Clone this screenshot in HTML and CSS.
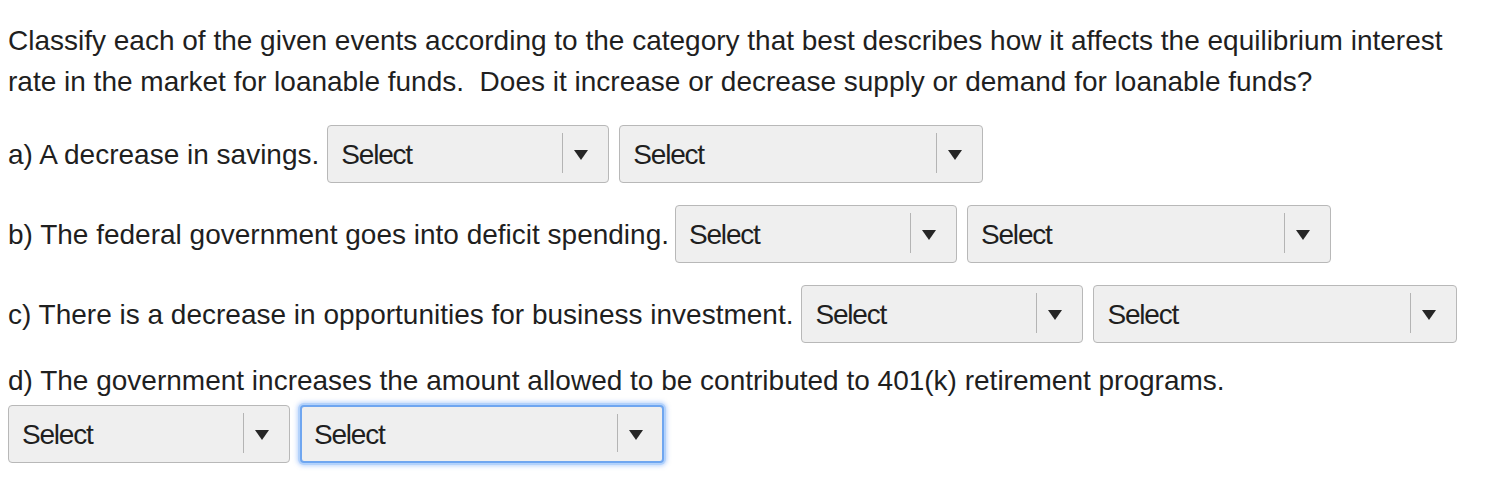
FILE: index.html
```html
<!DOCTYPE html>
<html>
<head>
<meta charset="utf-8">
<link rel="stylesheet" href="styles.css">
</head>
<body>
<p class="intro">Classify each of the given events according to the category that best describes how it affects the equilibrium interest<br>rate in the market for loanable funds.&nbsp; Does it increase or decrease supply or demand for loanable funds?</p>

<div class="row">
  <span class="label">a) A decrease in savings.</span>
  <div class="sel narrow"><span class="val">Select</span><span class="div"></span><span class="arrow"></span></div>
  <div class="sel wide"><span class="val">Select</span><span class="div"></span><span class="arrow"></span></div>
</div>

<div class="row">
  <span class="label label-b">b) The federal government goes into deficit spending.</span>
  <div class="sel narrow"><span class="val">Select</span><span class="div"></span><span class="arrow"></span></div>
  <div class="sel wide"><span class="val">Select</span><span class="div"></span><span class="arrow"></span></div>
</div>

<div class="row">
  <span class="label">c) There is a decrease in opportunities for business investment.</span>
  <div class="sel narrow"><span class="val">Select</span><span class="div"></span><span class="arrow"></span></div>
  <div class="sel wide"><span class="val">Select</span><span class="div"></span><span class="arrow"></span></div>
</div>

<div class="row row-d">
  <span class="label">d) The government increases the amount allowed to be contributed to 401(k) retirement programs.</span>
  <div class="sel narrow"><span class="val">Select</span><span class="div"></span><span class="arrow"></span></div>
  <div class="sel wide focused"><span class="val">Select</span><span class="div"></span><span class="arrow"></span></div>
</div>
</body>
</html>
```
FILE: styles.css
```css
html, body {
  background: #ffffff;
}
body {
  margin: 8px;
  font-family: "Liberation Sans", Arial, sans-serif;
  font-size: 28px;
  line-height: 41px;
  color: #1f1f1f;
}
.intro {
  margin: 12px 0 23px 0;
}
.row {
  display: flex;
  flex-wrap: wrap;
  align-items: center;
  column-gap: 10px;
  row-gap: 4px;
  margin-bottom: 22px;
}
.row-d {
  margin-top: -5px;
}
.label {
  white-space: nowrap;
  margin-right: -2px;
}
.label-b {
  margin-right: -4px;
}
.row-d .label {
  flex-basis: 100%;
  margin-right: 0;
}
.sel {
  position: relative;
  box-sizing: border-box;
  height: 58px;
  display: flex;
  align-items: center;
  background: #efefef;
  border: 1px solid #b8b8b8;
  border-radius: 4px;
  color: #1f1f1f;
  font-size: 28px;
  letter-spacing: -1.2px;
}
.sel.narrow {
  width: 282px;
}
.sel.wide {
  width: 364px;
}
.val {
  flex: 1;
  padding-left: 13px;
}
.div {
  width: 1px;
  align-self: stretch;
  margin: 7px 0 9px;
  background: #b4b4b4;
}
.arrow {
  width: 0;
  height: 0;
  margin: 1px 20px 0 11px;
  border-left: 7.5px solid transparent;
  border-right: 7.5px solid transparent;
  border-top: 10px solid #262626;
}
.sel.focused {
  border: 2px solid #6fa6f0;
  box-shadow: 0 0 0 2px #b3d2fb, 0 0 4px 3px rgba(120, 170, 250, 0.5);
}
.sel.focused .val {
  padding-left: 12px;
}
.sel.focused .arrow {
  margin-right: 19px;
}
```
